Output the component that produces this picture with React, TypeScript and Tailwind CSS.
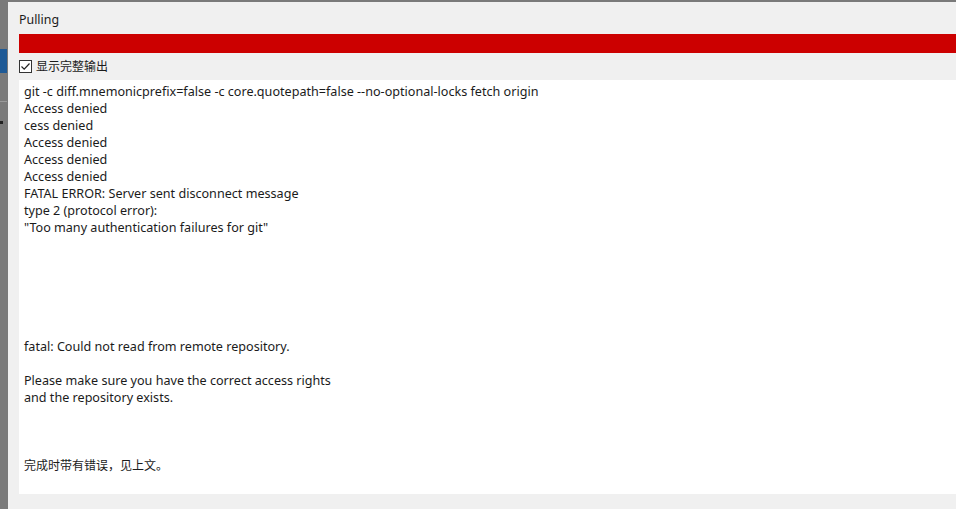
const LINES: string[] = [
  'git -c diff.mnemonicprefix=false -c core.quotepath=false --no-optional-locks fetch origin',
  'Access denied',
  'cess denied',
  'Access denied',
  'Access denied',
  'Access denied',
  'FATAL ERROR: Server sent disconnect message',
  'type 2 (protocol error):',
  '"Too many authentication failures for git"',
  '',
  '',
  '',
  '',
  '',
  '',
  'fatal: Could not read from remote repository.',
  '',
  'Please make sure you have the correct access rights',
  'and the repository exists.',
  '',
  '',
  '',
];

function CheckBox() {
  return (
    <span className="flex h-[13px] w-[13px] items-center justify-center border border-[#333333] bg-white">
      <svg width="11" height="11" viewBox="0 0 11 11" fill="none">
        <path d="M1.5 5.5 L4.2 8.2 L9.5 2.5" stroke="#222" strokeWidth="1.2" />
      </svg>
    </span>
  );
}

export default function App() {
  return (
    <div
      className="flex h-[509px] w-[956px] overflow-hidden bg-[#7a7a7a] text-[12.6px] text-[#1b1b1b]"
      style={{ fontFamily: '"Noto Sans", "Noto Sans CJK SC", sans-serif' }}
    >
      {/* window behind the dialog */}
      <div className="flex w-[8px] shrink-0 flex-col">
        <div className="h-[49px]" />
        <div className="h-[24px] w-[7px] bg-[#1e5a96]" />
        <div className="h-[28px]" />
        <div className="h-px w-[7px] bg-[#9a9a9a]" />
        <div className="mt-[19px] h-[3px] w-[3px] bg-[#222]" />
      </div>

      <div className="flex flex-1 flex-col pt-[2px]">
        <div className="flex flex-1 flex-col bg-[#f0f0f0] pl-[11px]">
          <div className="flex h-[32px] items-center pt-[5px] text-[12.4px] leading-none">Pulling</div>
          <div className="h-[19px] bg-[#cc0000]" />
          <div className="flex h-[27px] items-center gap-[4px]">
            <CheckBox />
            <span className="text-[12px] leading-none">显示完整输出</span>
          </div>
          <div className="h-[414px] bg-white px-[5px] pt-[3px] leading-[17px]">
            {LINES.map((l, i) => (
              <div key={i} className="h-[17px] whitespace-pre">
                {l}
              </div>
            ))}
            <div className="h-[17px] whitespace-pre text-[12px]">完成时带有错误，见上文。</div>
          </div>
        </div>
      </div>
    </div>
  );
}
